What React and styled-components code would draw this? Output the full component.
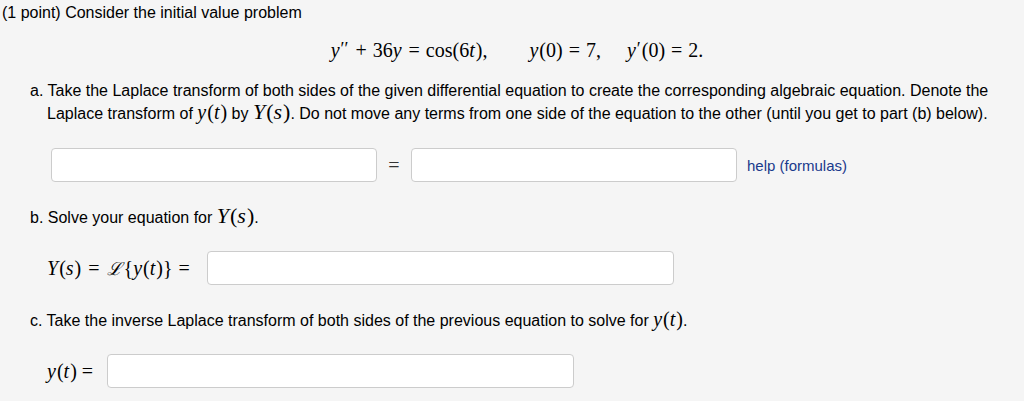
import React from 'react'
import styled, { createGlobalStyle } from 'styled-components'

const GlobalStyle = createGlobalStyle`
  html, body {
    margin: 0;
    padding: 0;
    background: #f5f5f5;
  }
  body {
    font-family: "Liberation Sans", Arial, sans-serif;
    font-size: 16px;
    color: #000;
  }
`

const Page = styled.div`
  width: 1024px;
  height: 401px;
  overflow: hidden;
  padding: 3px 0 0 2px;
  box-sizing: border-box;
`

const Para = styled.p`
  margin: ${p => p.$margin || '0'};
  padding-left: ${p => p.$indent || 0}px;
  line-height: ${p => p.$lh || 23}px;
`

const Hang = styled.div`
  margin: ${p => p.$margin || '0'};
  padding-left: 45px;
  text-indent: -17px;
  line-height: 23px;
  padding-right: 20px;
`

const Display = styled.div`
  display: flex;
  justify-content: center;
  align-items: baseline;
  margin: 17px 0 17px 8px;
  font-family: "Liberation Serif", "Times New Roman", serif;
  font-size: 20px;
  line-height: 21px;
`

const M = styled.span`
  font-family: "Liberation Serif", "Times New Roman", serif;
  font-size: ${p => p.$size || 20}px;
  line-height: ${p => (p.$inline ? 0 : 1)};
  white-space: nowrap;
`

const V = styled.i`
  font-style: italic;
  margin-right: ${p => p.$kern || 1}px;
`

const Prime = styled.span`
  font-size: 0.9em;
  position: relative;
  top: -2px;
  margin-right: 1px;
`

const Op = styled.span`
  margin: 0 ${p => p.$m || 6}px;
`

const Gap = styled.span`
  display: inline-block;
  width: ${p => p.$w}px;
`

const Row = styled.div`
  display: flex;
  align-items: center;
  padding-left: ${p => p.$indent}px;
  margin: ${p => p.$margin || '0'};
  gap: ${p => p.$gap || 10}px;
`

const Answer = styled.input`
  box-sizing: border-box;
  width: ${p => p.$w}px;
  height: 34px;
  background: #fff;
  border: 1px solid #cccccc;
  border-radius: 4px;
  outline: none;
  padding: 4px 6px;
  font-size: 14px;
`

const Equals = styled.span`
  font-family: "Liberation Serif", serif;
  font-size: 20px;
  color: #333;
  width: 14px;
  text-align: center;
`

const HelpLink = styled.a`
  color: #1a3a8c;
  text-decoration: none;
  font-size: 15px;
  cursor: pointer;
`

const Cal = styled.span`
  font-family: "DejaVu Serif", serif;
  font-style: italic;
  font-size: 0.9em;
  margin-right: 2px;
`

const App = () => {
  return (
    <Page>
      <GlobalStyle />
      <Para $lh={20}>(1 point) Consider the initial value problem</Para>

      <Display>
        <V>y</V><Prime>′′</Prime><Op>+</Op>36<V>y</V><Op>=</Op>cos(6<V>t</V>),
        <Gap $w={42} />
        <V>y</V>(0)<Op>=</Op>7,
        <Gap $w={26} />
        <V>y</V><Prime>′</Prime>(0)<Op>=</Op>2.
      </Display>

      <Hang>
        a. Take the Laplace transform of both sides of the given differential equation to create the
        corresponding algebraic equation. Denote the Laplace transform of{' '}
        <M $inline><V>y</V>(<V>t</V>)</M> by <M $inline $size={22}><V>Y</V>(<V>s</V>)</M>. Do not
        move any terms from one side of the equation to the other (until you get to part (b) below).
      </Hang>

      <Row $indent={49} $margin="23px 0 0 0">
        <Answer $w={326} />
        <Equals>=</Equals>
        <Answer $w={326} />
        <HelpLink>help (formulas)</HelpLink>
      </Row>

      <Para $indent={28} $margin="24px 0 0 0">
        b. Solve your equation for <M $inline $size={22}><V>Y</V>(<V>s</V>)</M>.
      </Para>

      <Row $indent={45} $margin="22px 0 0 0" $gap={11}>
        <M>
          <V>Y</V>(<V>s</V>)<Op $m={7}>=</Op><Cal>ℒ</Cal>{'{'}<V>y</V>(<V>t</V>){'}'}<Op $m={6}>=</Op>
        </M>
        <Answer $w={467} />
      </Row>

      <Para $indent={28} $margin="24px 0 0 0">
        c. Take the inverse Laplace transform of both sides of the previous equation to solve for{' '}
        <M $inline><V>y</V>(<V>t</V>)</M>.
      </Para>

      <Row $indent={45} $margin="22px 0 0 0" $gap={9}>
        <M>
          <V>y</V>(<V>t</V>)<Op $m={5}>=</Op>
        </M>
        <Answer $w={467} />
      </Row>
    </Page>
  )
}

export default App
